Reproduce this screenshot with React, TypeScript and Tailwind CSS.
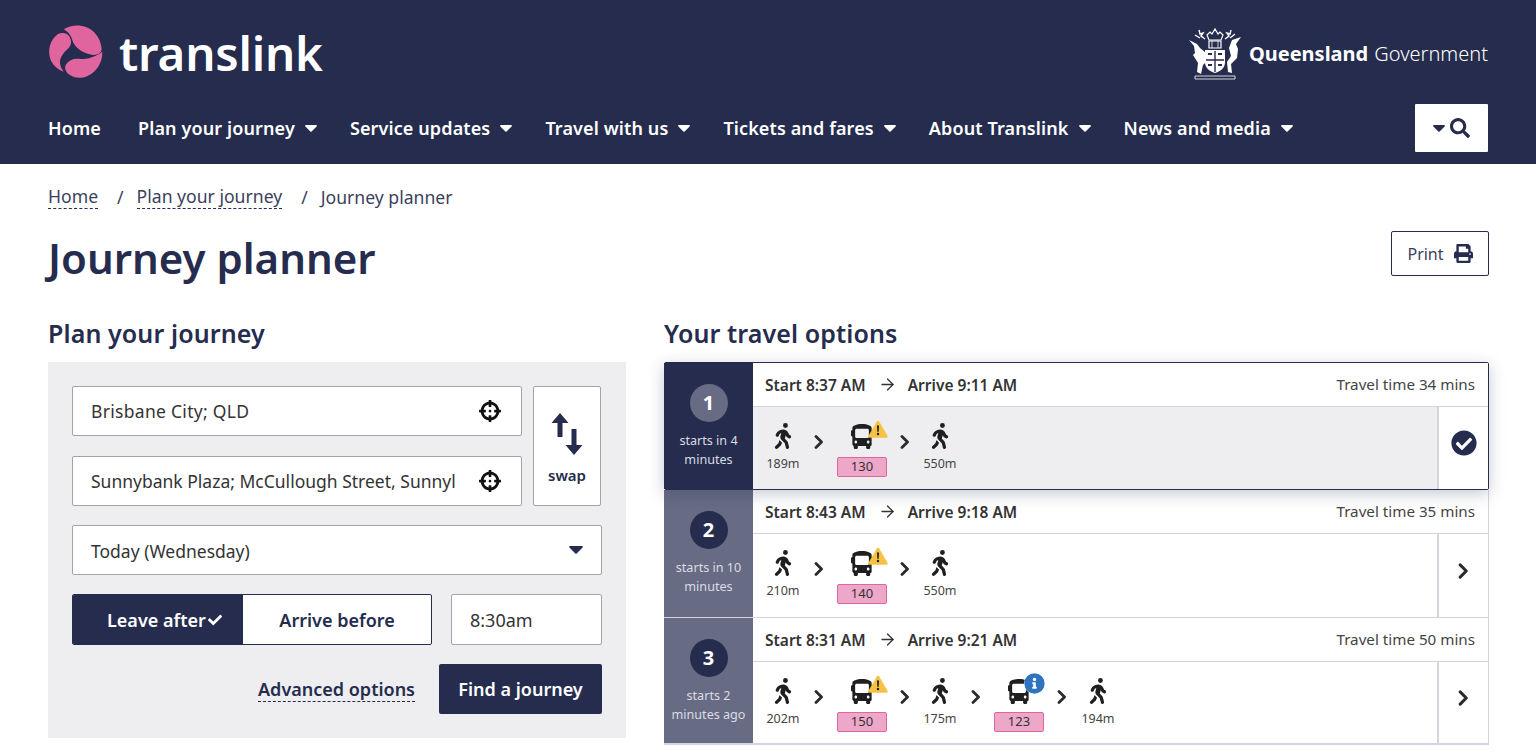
import { FaBus, FaCheck, FaCheckCircle, FaCrosshairs, FaInfoCircle, FaPrint, FaSearch } from "react-icons/fa";
import { FaPersonWalking } from "react-icons/fa6";
import { ArrowRight } from "lucide-react";

const navItems = ["Plan your journey", "Service updates", "Travel with us", "Tickets and fares", "About Translink", "News and media"];

type Step =
  | { kind: "walk"; label: string }
  | { kind: "bus"; route: string; alert: "warning" | "info" };

interface Option {
  id: number;
  start: string;
  arrive: string;
  travel: string;
  when: string[];
  steps: Step[];
}

const options: Option[] = [
  {
    id: 1,
    start: "8:37 AM",
    arrive: "9:11 AM",
    travel: "34 mins",
    when: ["starts in 4", "minutes"],
    steps: [
      { kind: "walk", label: "189m" },
      { kind: "bus", route: "130", alert: "warning" },
      { kind: "walk", label: "550m" },
    ],
  },
  {
    id: 2,
    start: "8:43 AM",
    arrive: "9:18 AM",
    travel: "35 mins",
    when: ["starts in 10", "minutes"],
    steps: [
      { kind: "walk", label: "210m" },
      { kind: "bus", route: "140", alert: "warning" },
      { kind: "walk", label: "550m" },
    ],
  },
  {
    id: 3,
    start: "8:31 AM",
    arrive: "9:21 AM",
    travel: "50 mins",
    when: ["starts 2", "minutes ago"],
    steps: [
      { kind: "walk", label: "202m" },
      { kind: "bus", route: "150", alert: "warning" },
      { kind: "walk", label: "175m" },
      { kind: "bus", route: "123", alert: "info" },
      { kind: "walk", label: "194m" },
    ],
  },
];

const Caret = ({ className }: { className: string }) => (
  <svg viewBox="0 0 14 8" className={className} fill="currentColor">
    <path d="M1 0h12c.8 0 1.2 1 .6 1.600L7.700 7.400c-.4.4-1 .4-1.400 0L.4 1.600C-.2 1 .2 0 1 0z" />
  </svg>
);

const Chevron = ({ className }: { className: string }) => (
  <svg viewBox="0 0 10 14" className={className} fill="none" stroke="#2b2b2b" strokeWidth="2.800" strokeLinecap="round" strokeLinejoin="round">
    <path d="M2 1.500L7.500 7 2 12.500" />
  </svg>
);

const WarningBadge = () => (
  <svg viewBox="0 0 20 18" className="absolute -top-[4px] -right-[15px] w-5 h-[18px]">
    <path d="M10 .8c.5 0 .9.3 1.200.7l8.300 14.300c.5.9-.1 1.900-1.100 1.900H1.600c-1 0-1.600-1-1.100-1.900L8.800 1.500c.3-.4.7-.7 1.200-.7z" fill="#f5c242" />
    <path d="M9 5.500h2l-.3 6.200H9.300z" fill="#1f1f1f" />
    <circle cx="10" cy="14" r="1.200" fill="#1f1f1f" />
  </svg>
);

const Logo = () => (
  <svg viewBox="0 0 192 192" className="w-16 h-16 -m-1 -mt-[5px] -ml-[5px]" fill="#e0659f">
    <path d="M62 28C90 10 130 12 155 38c13 14 20 32 21 50-1 14-18 20-36 15-22-5-38-16-48-33-6-12-6-28-30-42z" />
    <path d="M45 42c12-6 26-4 33 6 8 12 9 25-1 36-13 12-24 24-26 39-1 11 3 22 11 32-16-6-30-17-38-33C12 92 20 60 45 42z" />
    <path d="M178 95c1 32-17 61-46 74-17 7-36 6-50-3-14-8-20-24-12-34 8-11 20-17 36-16 14 1 28 2 40-4 13-5 23-10 32-17z" />
  </svg>
);

const Crest = () => (
  <svg viewBox="0 0 56 54" className="w-14 h-[54px]" fill="none" stroke="white">
    {/* crown and helm */}
    <path d="M20 9l3-3 2 2 3-5 3 5 2-2 3 3-2 5H22z" strokeWidth="1.200" />
    <path d="M12 4l1 4 3-1-2 3 4 3M44 4l-1 4-3-1 2 3-4 3M8 9l5 3M48 8l-5 4" strokeWidth="1.400" />
    <path d="M22 15h12v7H22z" strokeWidth="1.200" />
    <path d="M25 15v7M31 15v7" strokeWidth="0.800" />
    {/* stag */}
    <path d="M2 14l5 6 1 7-2 2 5 8-1 9 4 2 2-9 3-3v-9l-6-5-3-4z" fill="white" stroke="none" />
    {/* brolga side */}
    <path d="M54 11l-9 3-3 8 2 8-4 6 1 10 4 1-1-9 6-6 1-9-2-5z" fill="white" stroke="none" />
    {/* shield */}
    <path d="M18 24h20v12c0 6-4 9-10 11-6-2-10-5-10-11z" fill="white" stroke="none" />
    <path d="M28 25v21M19 34h18" stroke="#252c4e" strokeWidth="1.400" />
    <path d="M21 28h4M31 28h4M21 39h4M31 39h4" stroke="#252c4e" strokeWidth="2" />
    {/* motto */}
    <path d="M8 50h40v3H8z" strokeWidth="0.800" />
  </svg>
);

const SwapIcon = () => (
  <svg viewBox="0 0 32 42" className="w-8 h-[42px]" fill="#252c4e">
    <path d="M9 0l8.500 10H11.500v14h-5V10H.5z" />
    <path d="M23 42l-8.500-10h6V16h5v16h6z" />
  </svg>
);

const FormBox = ({ children, className }: { children: React.ReactNode; className: string }) => (
  <div className={`flex items-center bg-white border border-[#a3a3a8] rounded-[2px] ${className}`}>{children}</div>
);

const StepChevron = ({ wide }: { wide: boolean }) => (
  <div className={`flex justify-center pt-[28px] ${wide ? "w-9" : "w-[35px]"}`}>
    <Chevron className="w-[10px] h-[14px]" />
  </div>
);

const WalkStep = ({ label }: { label: string }) => (
  <div className="w-9 flex flex-col items-center pt-[16px]">
    <FaPersonWalking className="w-[26px] h-[26px] text-[#1f1f1f]" />
    <span className="mt-[6px] text-[12.500px] leading-[17px] text-[#444]">{label}</span>
  </div>
);

const BusStep = ({ route, alert }: { route: string; alert: "warning" | "info" }) => (
  <div className="w-[50px] flex flex-col items-center pt-[17px]">
    <div className="relative">
      <FaBus preserveAspectRatio="none" className="w-[22px] h-[25px] text-[#1f1f1f]" />
      {alert === "warning" ? (
        <WarningBadge />
      ) : (
        <FaInfoCircle className="absolute -top-[6px] -right-[15px] w-[21px] h-[21px] text-[#2f74c0] bg-white rounded-full" />
      )}
    </div>
    <div className="mt-[8px] w-[50px] h-[20px] flex items-center justify-center bg-[#eda7c9] border border-[#e0659f] rounded-[2px] text-[13px] text-[#333]">
      {route}
    </div>
  </div>
);

const cardFrame: Record<number, string> = {
  1: "relative z-10 h-[128px] border border-[#252c4e] rounded-[2px] shadow-[0_4px_16px_rgba(37,44,78,0.25)] bg-white",
  2: "h-[128px] border-r border-b border-[#d4d4dc]",
  3: "h-[127px] border-r border-b-2 border-[#d4d4dc]",
};

const OptionCard = ({ option, selected }: { option: Option; selected: boolean }) => (
  <div className={`flex ${cardFrame[option.id]}`}>
    <div className={`w-[89px] shrink-0 flex flex-col items-center pt-[21px] ${selected ? "bg-[#252c4e] -ml-px" : "bg-[#676b84]"}`}>
      <div className={`w-[38px] h-[38px] rounded-full flex items-center justify-center text-white text-[20px] font-bold ${selected ? "bg-[#676b84]" : "bg-[#252c4e]"}`}>
        {option.id}
      </div>
      <div className="mt-[9px] text-center text-[12.600px] leading-[19px] text-[#dcdce4]">
        {option.when.map((line) => (
          <div key={line}>{line}</div>
        ))}
      </div>
    </div>
    <div className="flex-1 flex flex-col min-w-0">
      <div className="h-[44px] shrink-0 flex items-center pl-3 pr-[13px] pt-[2px] border-b border-[#d4d4dc] bg-white text-[#333] text-[15.500px]">
        <span className="font-semibold">Start {option.start}</span>
        <ArrowRight className="w-[19px] h-[19px] -mt-[2px] ml-[12px] mr-[11px] text-[#333]" strokeWidth={1.6} />
        <span className="font-semibold">Arrive {option.arrive}</span>
        <span className="ml-auto -mt-[2px] text-[15.200px] text-[#444]">Travel time {option.travel}</span>
      </div>
      <div className="flex-1 flex">
        <div className={`flex-1 flex pl-3 ${selected ? "bg-[#eeeef1]" : "bg-white"}`}>
          {option.steps.map((step, i) => (
            <div key={i} className="flex">
              {i > 0 && <StepChevron wide={step.kind === "bus" || i > 2} />}
              {step.kind === "walk" ? <WalkStep label={step.label} /> : <BusStep route={step.route} alert={step.alert} />}
            </div>
          ))}
        </div>
        <div className="w-[51px] shrink-0 flex items-center justify-center pb-[10px] border-l-2 border-[#d4d4dc] bg-white">
          {selected ? (
            <FaCheckCircle className="w-[26px] h-[26px] text-[#252c4e]" />
          ) : (
            <Chevron className="w-[11px] h-[16px]" />
          )}
        </div>
      </div>
    </div>
  </div>
);

export default function App() {
  return (
    <div className="h-[753px] overflow-hidden bg-white text-[#252c4e] font-['Noto_Sans','Open_Sans',sans-serif]">
      <header className="h-[164px] bg-[#252c4e] px-12 text-white">
        <div className="h-[104px] flex items-start justify-between">
          <div className="flex items-center gap-4 pt-[25px]">
            <Logo />
            <span className="text-[47.500px] leading-[54px] font-semibold tracking-[-0.2px]">translink</span>
          </div>
          <div className="flex items-center gap-[6px] pt-[26px]">
            <Crest />
            <span className="mt-[2px] text-[20px] font-bold">Queensland</span>
            <span className="mt-[2px] text-[20px] font-light">Government</span>
          </div>
        </div>
        <div className="flex items-center justify-between h-[48px]">
          <nav className="flex items-center gap-[33px] text-[18px] font-semibold tracking-[0.12px]">
            <a className="mr-[4px]">Home</a>
            {navItems.map((name) => (
              <a key={name} className="flex items-center gap-[10px]">
                {name}
                <Caret className="w-3 h-[7px]" />
              </a>
            ))}
          </nav>
          <button className="w-[73px] h-[48px] bg-white rounded-[1px] flex items-center justify-center gap-[5px] text-[#252c4e]">
            <Caret className="w-3 h-[7px]" />
            <FaSearch className="w-5 h-5" />
          </button>
        </div>
      </header>

      <main className="px-12">
        <div className="pt-5 flex items-center text-[17.600px] leading-[24px] text-[#3b3f5c]">
          <a className="border-b border-dashed border-[#252c4e]">Home</a>
          <span className="ml-[19px] mr-[13px]">/</span>
          <a className="border-b border-dashed border-[#252c4e]">Plan your journey</a>
          <span className="ml-[19px] mr-[13px]">/</span>
          <span>Journey planner</span>
        </div>

        <div className="mt-[19px] flex items-start justify-between">
          <h1 className="text-[42px] leading-[60px] font-semibold">Journey planner</h1>
          <button className="mt-[3px] mr-[-1px] w-[98px] h-[45px] border border-[#252c4e] rounded-[2px] flex items-center justify-center gap-[10px] text-[16px] text-[#3b3f5c]">
            Print
            <FaPrint className="w-[19px] h-[19px] text-[#252c4e]" />
          </button>
        </div>

        <div className="mt-[28px] flex gap-[38px]">
          <section className="w-[578px] shrink-0">
            <h2 className="text-[25px] leading-[34px] font-semibold tracking-[0.1px]">Plan your journey</h2>
            <div className="mt-[12px] h-[376px] bg-[#eeeef1] px-6 pt-6 text-[#333] text-[17.500px]">
              <div className="flex gap-[11px]">
                <div className="w-[450px] flex flex-col gap-5">
                  <FormBox className="h-[50px] pl-[18px] pr-5 justify-between">
                    <span className="pt-[1px] tracking-[0.3px]">Brisbane City; QLD</span>
                    <FaCrosshairs className="w-[22px] h-[22px] text-[#111]" />
                  </FormBox>
                  <FormBox className="h-[50px] pl-[18px] pr-5 justify-between">
                    <span>Sunnybank Plaza; McCullough Street, Sunnyl</span>
                    <FaCrosshairs className="w-[22px] h-[22px] text-[#111]" />
                  </FormBox>
                </div>
                <div className="w-[68px] h-[120px] bg-white border border-[#a3a3a8] rounded-[2px] flex flex-col items-center pt-[26px]">
                  <SwapIcon />
                  <span className="mt-[10px] text-[15px] leading-[20px] font-semibold text-[#252c4e]">swap</span>
                </div>
              </div>
              <FormBox className="mt-[19px] w-[530px] h-[50px] pl-[18px] pr-[18px] justify-between">
                <span className="pt-[3px]">Today (Wednesday)</span>
                <Caret className="w-[14px] h-2 text-[#252c4e]" />
              </FormBox>
              <div className="mt-[19px] flex gap-[19px] text-[18px]">
                <div className="w-[360px] h-[51px] flex border border-[#252c4e] rounded-[2px] bg-white overflow-hidden font-semibold">
                  <div className="w-[170px] pt-[1px] bg-[#252c4e] text-white flex items-center pl-[34px] gap-[2px]">
                    Leave after
                    <FaCheck className="w-[14px] h-[14px]" />
                  </div>
                  <div className="flex-1 pt-[1px] flex items-center justify-center text-[#252c4e]">Arrive before</div>
                </div>
                <FormBox className="w-[151px] h-[51px] pl-[18px]">
                  <span className="pt-[1px]">8:30am</span>
                </FormBox>
              </div>
              <div className="mt-[19px] flex items-center justify-end gap-6 text-[18px]">
                <a className="leading-[24px] font-semibold text-[#252c4e] border-b border-dashed border-[#252c4e]">Advanced options</a>
                <button className="w-[163px] h-[50px] bg-[#252c4e] rounded-[2px] text-white font-semibold">Find a journey</button>
              </div>
            </div>
          </section>

          <section className="w-[825px] shrink-0">
            <h2 className="text-[25px] leading-[34px] font-semibold tracking-[0.1px]">Your travel options</h2>
            <div className="mt-[12px]">
              {options.map((option) => (
                <OptionCard key={option.id} option={option} selected={option.id === 1} />
              ))}
            </div>
          </section>
        </div>
      </main>
    </div>
  );
}
